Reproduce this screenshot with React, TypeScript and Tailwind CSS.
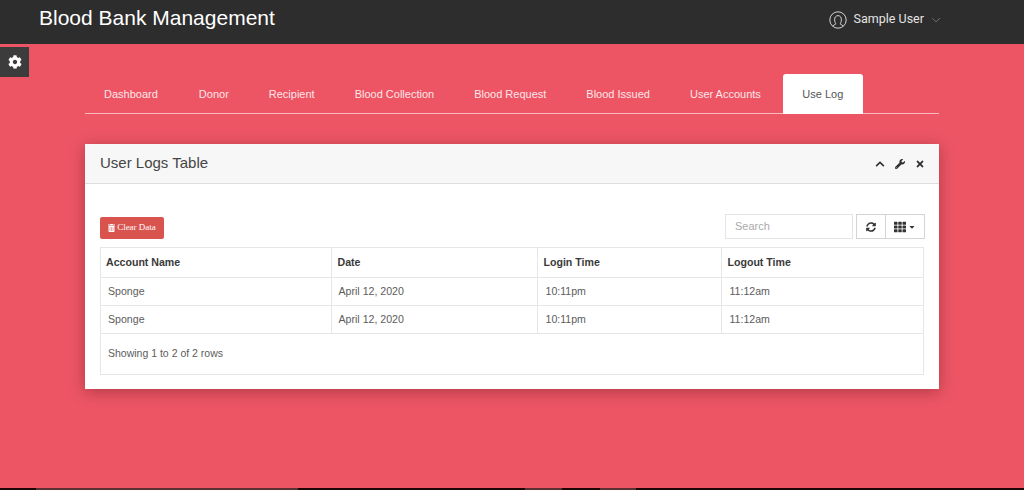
import { FaCaretDown, FaChevronUp, FaCog, FaSyncAlt, FaTh, FaTimes, FaTrashAlt, FaWrench } from "react-icons/fa";
import { SlArrowDown } from "react-icons/sl";

const tabs = [
  "Dashboard",
  "Donor",
  "Recipient",
  "Blood Collection",
  "Blood Request",
  "Blood Issued",
  "User Accounts",
];

const rows = [
  { name: "Sponge", date: "April 12, 2020", login: "10:11pm", logout: "11:12am" },
  { name: "Sponge", date: "April 12, 2020", login: "10:11pm", logout: "11:12am" },
];

function UserIcon() {
  return (
    <svg viewBox="0 0 18 18" className="w-[18px] h-[18px]" fill="none" stroke="currentColor" strokeWidth="0.9">
      <circle cx="9" cy="9" r="8.2" />
      <path d="M6.6 13.2c.3-1-.9-1.9-1-4.3C5.500 6.300 7 4.600 9 4.600s3.500 1.700 3.400 4.300c-.1 2.400-1.300 3.300-1 4.300" />
      <path d="M3.800 15c.6-1 2-1.300 2.800-1.800M14.200 15c-.6-1-2-1.300-2.800-1.800" />
    </svg>
  );
}

export default function App() {
  return (
    <div className="w-[1024px] h-[490px] overflow-hidden bg-[#ed5565] font-['Liberation_Sans',sans-serif] relative">
      {/* Top bar */}
      <header className="h-[44px] bg-[#2d2d2d] flex items-center justify-between pl-[39px] pr-[84px]">
        <h1 className="text-[21px] leading-[36px] -mt-[9px] text-white">Blood Bank Management</h1>
        <div className="flex items-center -mt-[5px] text-[#e4e4e4]">
          <UserIcon />
          <span className="ml-[7px] text-[12.5px] font-['Roboto',sans-serif]">Sample User</span>
          <SlArrowDown className="ml-[8px] w-[8px] h-[8px] text-[#8a8a8a]" />
        </div>
      </header>

      {/* Settings toggle */}
      <button className="absolute left-0 top-[47px] w-[29px] h-[30px] bg-[#3c3c3c] flex items-center justify-center text-white">
        <FaCog className="w-[14px] h-[14px]" />
      </button>

      <main className="pl-[85px] pr-[85px]">
        {/* Tabs */}
        <nav className="mt-[30px] h-[40px] flex border-b border-[#f9b9c0]">
          {tabs.map((tab) => (
            <a key={tab} className="px-[20px] first:pl-[19px] first:pr-[21px] pt-[1px] h-[39px] flex items-center text-[11px] text-[#fde6e8]">
              {tab}
            </a>
          ))}
          <a className="ml-[2px] w-[80px] pt-[1px] h-[40px] flex items-center justify-center bg-white rounded-t-[3px] text-[11px] text-[#555]">
            Use Log
          </a>
        </nav>

        {/* Panel */}
        <section className="mt-[30px] h-[245px] bg-white shadow-[0_3px_14px_rgba(90,20,30,0.4)]">
          <div className="h-[40px] bg-[#f7f7f7] border-b border-[#dedede] flex items-center justify-between pl-[15px] pr-[14px]">
            <h2 className="text-[15px] text-[#454545]">User Logs Table</h2>
            <div className="flex items-center gap-[10px] text-[#2f2f2f]">
              <FaChevronUp className="w-[10px] h-[10px]" />
              <FaWrench className="w-[10px] h-[10px]" />
              <FaTimes className="w-[10px] h-[10px]" />
            </div>
          </div>

          <div className="pt-[30px] px-[15px]">
            {/* Toolbar */}
            <div className="h-[25px] flex justify-between items-end">
              <button className="h-[22px] w-[64px] bg-[#d9534f] rounded-[2px] flex items-center justify-center text-white text-[9px] font-['Liberation_Serif',serif]">
                <FaTrashAlt className="w-[7px] h-[8px] mr-[2px]" />
                Clear Data
              </button>
              <div className="flex -mr-px">
                <input
                  placeholder="Search"
                  className="w-[128px] h-[25px] border border-[#e4e4e4] px-[9px] pb-[1px] text-[11px] outline-none placeholder:text-[#aaa]"
                />
                <button className="ml-[3px] w-[30px] h-[25px] border border-[#d4d4d4] flex items-center justify-center text-[#333]">
                  <FaSyncAlt className="w-[10px] h-[10px]" />
                </button>
                <button className="-ml-px w-[40px] h-[25px] border border-[#d4d4d4] flex items-center justify-center gap-[2px] text-[#333]">
                  <FaTh className="w-[12px] h-[12px]" />
                  <FaCaretDown className="w-[8px] h-[8px]" />
                </button>
              </div>
            </div>

            {/* Table */}
            <div className="mt-[8px] border border-[#e6e6e6]">
              <table className="w-full table-fixed border-collapse text-[10.6px]">
                <colgroup>
                  <col className="w-[230px]" />
                  <col className="w-[206px]" />
                  <col className="w-[184px]" />
                  <col />
                </colgroup>
                <thead>
                  <tr className="h-[29px] text-left text-[#3a3a3a] font-bold">
                    <th className="pl-[5px] pt-[2px]">Account Name</th>
                    <th className="pl-[6px] pt-[2px] border-l border-[#e6e6e6]">Date</th>
                    <th className="pl-[6px] pt-[2px] border-l border-[#e6e6e6]">Login Time</th>
                    <th className="pl-[6px] pt-[2px] border-l border-[#e6e6e6]">Logout Time</th>
                  </tr>
                </thead>
                <tbody className="text-[#5c5c5c]">
                  {rows.map((row, i) => (
                    <tr key={i} className="h-[28px] border-t border-[#e6e6e6]">
                      <td className="pl-[7px] pt-[2px]">{row.name}</td>
                      <td className="pl-[7px] pt-[2px] border-l border-[#e6e6e6]">{row.date}</td>
                      <td className="pl-[8px] pt-[2px] border-l border-[#e6e6e6]">{row.login}</td>
                      <td className="pl-[8px] pt-[2px] border-l border-[#e6e6e6]">{row.logout}</td>
                    </tr>
                  ))}
                </tbody>
              </table>
              <div className="h-[41px] border-t border-[#e6e6e6] pl-[7px] flex items-center text-[10.5px] text-[#5c5c5c]">
                Showing 1 to 2 of 2 rows
              </div>
            </div>
          </div>
        </section>
      </main>

      {/* Dark strip along the bottom edge */}
      <div className="absolute left-0 right-0 bottom-0 h-[2px] bg-[#1c0606] flex">
        <div className="ml-[36px] w-[262px] bg-[#5a3030]" />
        <div className="ml-[227px] w-[37px] bg-[#5a3030]" />
        <div className="ml-[38px] w-[36px] bg-[#5a3030]" />
      </div>
    </div>
  );
}
